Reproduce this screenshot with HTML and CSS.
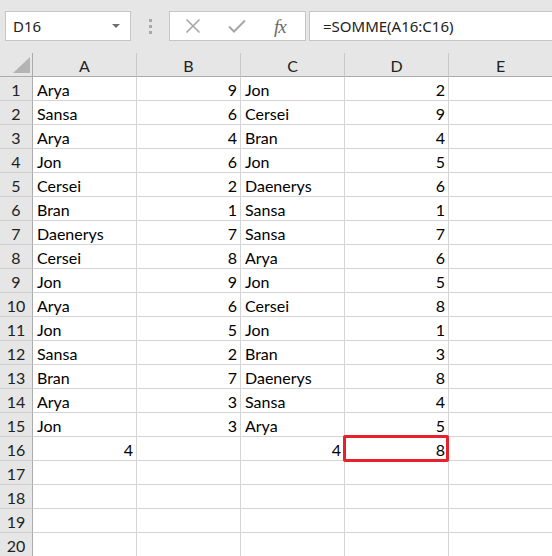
FILE: index.html
```html
<!DOCTYPE html>
<html>
<head>
<meta charset="utf-8">
<link rel="stylesheet" href="styles.css">
</head>
<body>
<div class="toolbar">
  <div class="namebox"><span class="ref">D16</span><span class="caret"></span></div>
  <div class="grip"><i></i><i></i><i></i></div>
  <div class="iconbox">
    <svg class="ico-x" width="16" height="16" viewBox="0 0 16 16"><path d="M1.5 1.5 L14.5 14.5 M14.5 1.5 L1.5 14.5" stroke="#a6a6a6" stroke-width="1.6" fill="none"/></svg>
    <svg class="ico-check" width="18" height="14" viewBox="0 0 18 14"><path d="M1 7.5 L6 12.5 L17 1.5" stroke="#a6a6a6" stroke-width="2" fill="none"/></svg>
    <span class="fx">fx</span>
  </div>
  <div class="formula">=SOMME(A16:C16)</div>
</div>
<div class="sheet">
  <div class="corner"><span class="tri"></span></div>
  <div class="ch">A</div><div class="ch">B</div><div class="ch">C</div><div class="ch">D</div><div class="ch">E</div>

  <div class="rh">1</div><div class="c">Arya</div><div class="c n">9</div><div class="c">Jon</div><div class="c n">2</div><div class="c"></div>
  <div class="rh">2</div><div class="c">Sansa</div><div class="c n">6</div><div class="c">Cersei</div><div class="c n">9</div><div class="c"></div>
  <div class="rh">3</div><div class="c">Arya</div><div class="c n">4</div><div class="c">Bran</div><div class="c n">4</div><div class="c"></div>
  <div class="rh">4</div><div class="c">Jon</div><div class="c n">6</div><div class="c">Jon</div><div class="c n">5</div><div class="c"></div>
  <div class="rh">5</div><div class="c">Cersei</div><div class="c n">2</div><div class="c">Daenerys</div><div class="c n">6</div><div class="c"></div>
  <div class="rh">6</div><div class="c">Bran</div><div class="c n">1</div><div class="c">Sansa</div><div class="c n">1</div><div class="c"></div>
  <div class="rh">7</div><div class="c">Daenerys</div><div class="c n">7</div><div class="c">Sansa</div><div class="c n">7</div><div class="c"></div>
  <div class="rh">8</div><div class="c">Cersei</div><div class="c n">8</div><div class="c">Arya</div><div class="c n">6</div><div class="c"></div>
  <div class="rh">9</div><div class="c">Jon</div><div class="c n">9</div><div class="c">Jon</div><div class="c n">5</div><div class="c"></div>
  <div class="rh">10</div><div class="c">Arya</div><div class="c n">6</div><div class="c">Cersei</div><div class="c n">8</div><div class="c"></div>
  <div class="rh">11</div><div class="c">Jon</div><div class="c n">5</div><div class="c">Jon</div><div class="c n">1</div><div class="c"></div>
  <div class="rh">12</div><div class="c">Sansa</div><div class="c n">2</div><div class="c">Bran</div><div class="c n">3</div><div class="c"></div>
  <div class="rh">13</div><div class="c">Bran</div><div class="c n">7</div><div class="c">Daenerys</div><div class="c n">8</div><div class="c"></div>
  <div class="rh">14</div><div class="c">Arya</div><div class="c n">3</div><div class="c">Sansa</div><div class="c n">4</div><div class="c"></div>
  <div class="rh">15</div><div class="c">Jon</div><div class="c n">3</div><div class="c">Arya</div><div class="c n">5</div><div class="c"></div>
  <div class="rh">16</div><div class="c n">4</div><div class="c"></div><div class="c n">4</div><div class="c n sel">8<span class="selbox"></span></div><div class="c"></div>
  <div class="rh">17</div><div class="c"></div><div class="c"></div><div class="c"></div><div class="c"></div><div class="c"></div>
  <div class="rh">18</div><div class="c"></div><div class="c"></div><div class="c"></div><div class="c"></div><div class="c"></div>
  <div class="rh">19</div><div class="c"></div><div class="c"></div><div class="c"></div><div class="c"></div><div class="c"></div>
  <div class="rh">20</div><div class="c"></div><div class="c"></div><div class="c"></div><div class="c"></div><div class="c"></div>
</div>
</body>
</html>
```
FILE: styles.css
```css
html, body {
  margin: 0;
  padding: 0;
  background: #ffffff;
  overflow: hidden;
}
body {
  width: 552px;
  height: 556px;
  font-family: Lato, "Liberation Sans", sans-serif;
}
.toolbar {
  height: 53px;
  box-sizing: border-box;
  background: #e6e6e6;
  display: flex;
  align-items: flex-start;
  padding-top: 11px;
  padding-left: 5px;
  font-family: "Noto Sans", "Open Sans", sans-serif;
}
.namebox {
  width: 126px;
  height: 30px;
  box-sizing: border-box;
  background: #fff;
  border: 1px solid #c6c6c6;
  display: flex;
  align-items: center;
  justify-content: space-between;
  padding: 0 10px 0 7px;
}
.ref {
  font-size: 15px;
  color: #222;
}
.caret {
  width: 0;
  height: 0;
  border-left: 4px solid transparent;
  border-right: 4px solid transparent;
  border-top: 4px solid #707070;
}
.grip {
  width: 38px;
  height: 30px;
  display: flex;
  flex-direction: column;
  align-items: center;
  justify-content: center;
  gap: 3px;
}
.grip i {
  display: block;
  width: 3px;
  height: 3px;
  background: #a8a8a8;
}
.iconbox {
  width: 137px;
  height: 30px;
  box-sizing: border-box;
  background: #fff;
  border: 1px solid #c6c6c6;
  display: flex;
  align-items: center;
  padding-left: 15px;
}
.ico-x { margin-right: 27px; }
.ico-check { margin-right: 28px; }
.fx {
  font-family: "Liberation Serif", "DejaVu Serif", serif;
  font-style: italic;
  font-size: 19px;
  color: #6a6a6a;
  letter-spacing: -1px;
  line-height: 1;
}
.formula {
  margin-left: 3px;
  flex: 1;
  height: 30px;
  box-sizing: border-box;
  background: #fff;
  border: 1px solid #c6c6c6;
  border-right: none;
  display: flex;
  align-items: center;
  padding-left: 13px;
  font-size: 15px;
  color: #222;
}
.sheet {
  display: grid;
  grid-template-columns: 33px repeat(5, 104px);
  grid-auto-rows: 24px;
  font-size: 16px;
  color: #000;
}
.corner {
  background: #e6e6e6;
  border-right: 1px solid #ababab;
  border-bottom: 1px solid #ababab;
  box-sizing: border-box;
  position: relative;
}
.tri {
  position: absolute;
  left: 13px;
  top: 4px;
  width: 0;
  height: 0;
  border-left: 17px solid transparent;
  border-bottom: 16px solid #b4b4b4;
}
.ch {
  background: #e6e6e6;
  border-right: 1px solid #c9c9c9;
  border-bottom: 1px solid #ababab;
  box-sizing: border-box;
  display: flex;
  align-items: center;
  justify-content: center;
  color: #222;
  padding-top: 1px;
}
.rh {
  background: #e6e6e6;
  border-right: 1px solid #ababab;
  border-bottom: 1px solid #d0d0d0;
  box-sizing: border-box;
  display: flex;
  align-items: center;
  justify-content: center;
  color: #222;
  padding-top: 1px;
}
.c {
  border-right: 1px solid #d4d4d4;
  border-bottom: 1px solid #d4d4d4;
  box-sizing: border-box;
  display: flex;
  align-items: center;
  padding: 1px 3px 0 4px;
  white-space: nowrap;
}
.n {
  justify-content: flex-end;
}
.sel {
  position: relative;
}
.selbox {
  position: absolute;
  left: -2px;
  top: -2px;
  right: -1px;
  bottom: -2px;
  border: 3px solid #e8202a;
  border-radius: 2px;
}
```
